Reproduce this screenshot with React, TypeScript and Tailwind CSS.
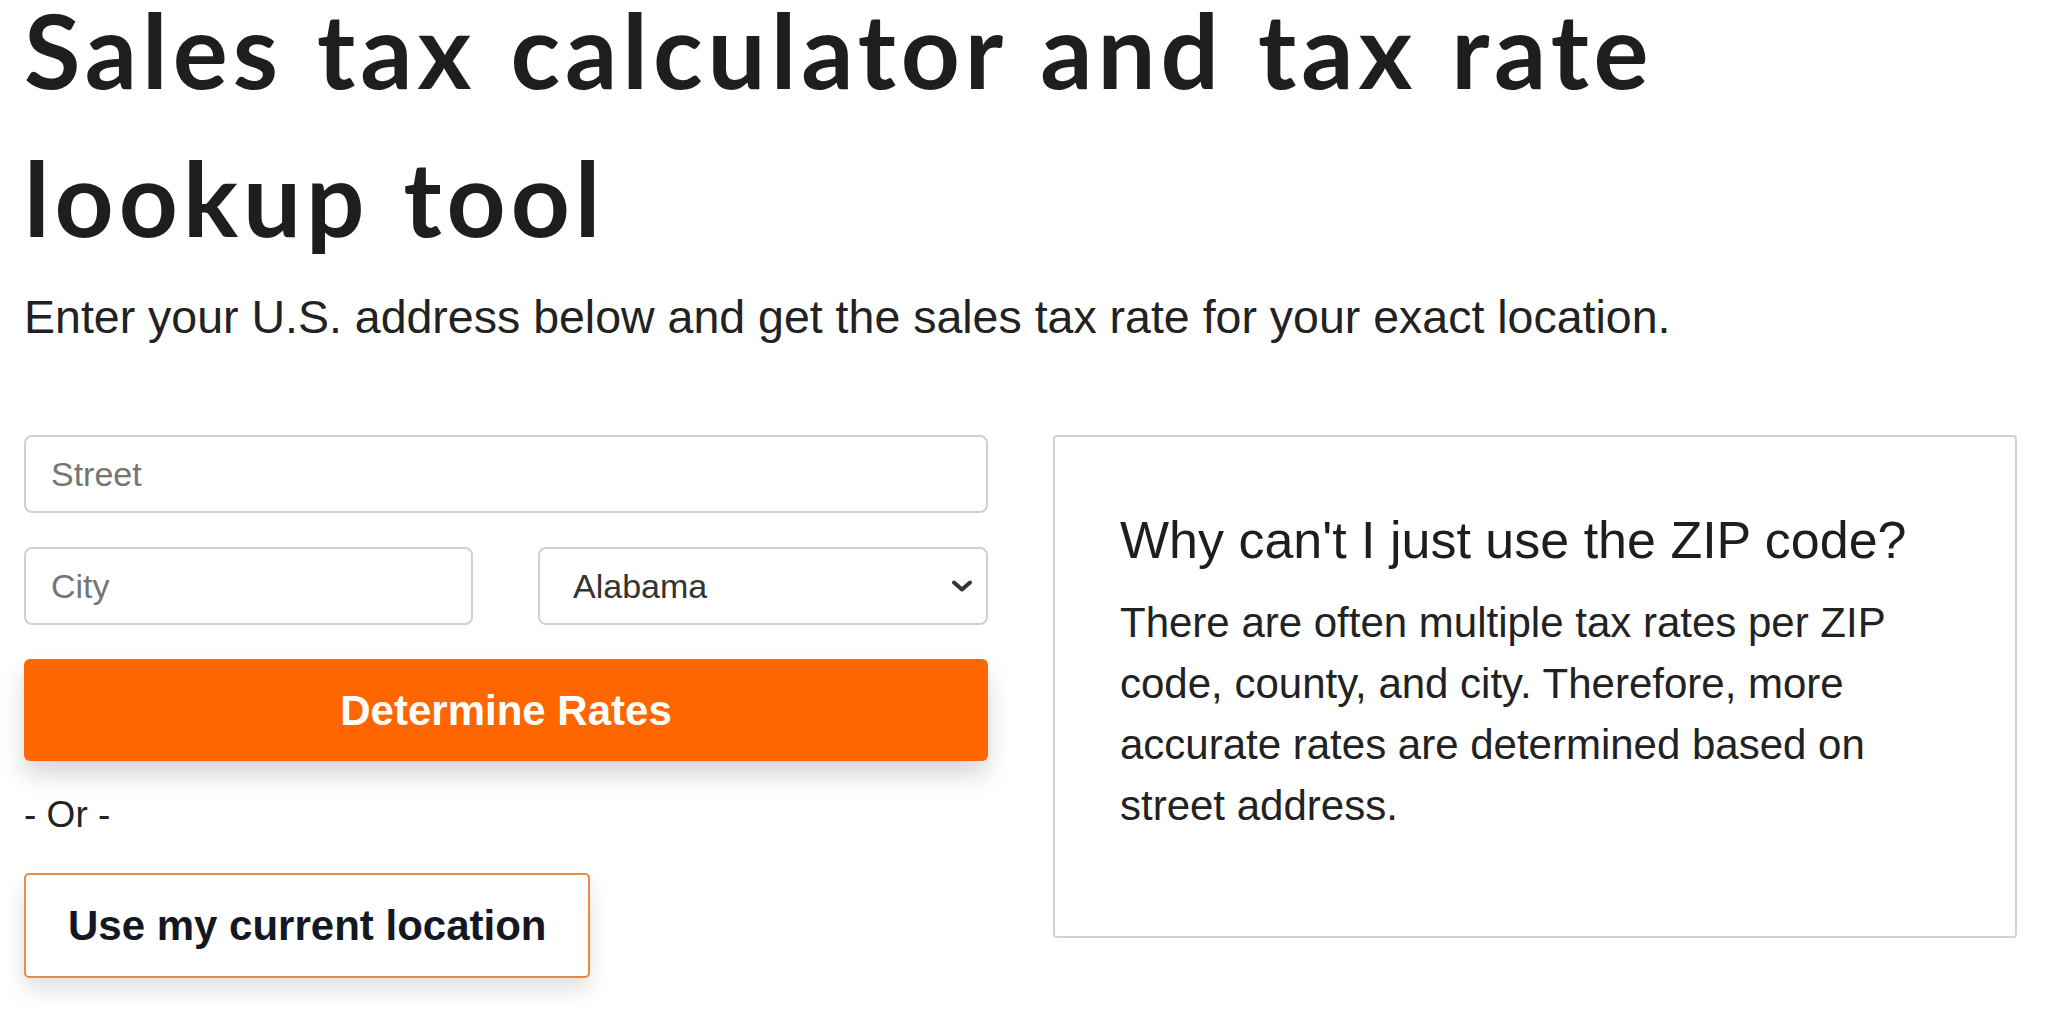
import React from 'react';

const US_STATES = ['Alabama', 'Alaska', 'Arizona', 'Arkansas', 'California', 'Colorado', 'Connecticut', 'Delaware', 'Florida', 'Georgia'];

const ChevronDown: React.FC = () => (
  <svg width="22" height="14" viewBox="0 0 22 14" fill="none" className="pointer-events-none absolute right-[15px] top-1/2 -translate-y-1/2">
    <path d="M3 3.5 L11 10.5 L19 3.5" stroke="#333" strokeWidth="4" strokeLinecap="round" strokeLinejoin="round" />
  </svg>
);

const App: React.FC = () => {
  return (
    <div className="min-h-screen bg-white text-[#222] font-['Liberation_Sans',Arial,sans-serif] overflow-hidden">
      <div className="pl-[24px] pr-[31px]">
        <h1 className="-mt-[25px] max-w-[1720px] font-['Lato',sans-serif] font-bold text-[103px] leading-[148px] tracking-[5px] [word-spacing:4px] text-[#1e1e1e]">
          Sales tax calculator and tax rate lookup tool
        </h1>
        <p className="mt-[15px] text-[46.5px] leading-[63px] text-[#222]">
          Enter your U.S. address below and get the sales tax rate for your exact location.
        </p>

        <div className="mt-[86px] grid grid-cols-[964px_964px] gap-x-[65px]">
          {/* address form */}
          <div className="flex flex-col">
            <input
              type="text"
              placeholder="Street"
              className="h-[78px] w-full rounded-[8px] border-2 border-[#d0d0d0] bg-white pl-[25px] text-[34px] text-[#333] outline-none placeholder:text-[#757575]"
            />
            <div className="mt-[34px] grid grid-cols-[449px_450px] gap-x-[65px]">
              <input
                type="text"
                placeholder="City"
                className="h-[78px] w-full rounded-[8px] border-2 border-[#d0d0d0] bg-white pl-[25px] text-[34px] text-[#333] outline-none placeholder:text-[#757575]"
              />
              <div className="relative">
                <select
                  defaultValue="Alabama"
                  className="h-[78px] w-full appearance-none rounded-[8px] border-2 border-[#d0d0d0] bg-white pl-[33px] text-[34px] text-[#333] outline-none"
                >
                  {US_STATES.map((s) => (
                    <option key={s} value={s}>{s}</option>
                  ))}
                </select>
                <ChevronDown />
              </div>
            </div>
            <button className="mt-[34px] h-[102px] w-full rounded-[6px] bg-[#ff6600] text-[42px] font-bold text-white shadow-[0_14px_24px_rgba(0,0,0,0.16)]">
              Determine Rates
            </button>
            <div className="mt-[30px] text-[37px] leading-[48px] text-[#222]">- Or -</div>
            <div className="mt-[34px]">
              <button className="h-[105px] rounded-[5px] border-2 border-[#e98a45] bg-white px-[42px] text-[42px] font-bold text-[#141822] shadow-[0_12px_22px_rgba(0,0,0,0.12)]">
                Use my current location
              </button>
            </div>
          </div>

          {/* info card */}
          <div className="h-[503px] rounded-[4px] border-2 border-[#d2d2d2] pl-[65px] pr-[65px] pt-[72px]">
            <h2 className="text-[52px] leading-[62px] text-[#1e1e1e]">Why can't I just use the ZIP code?</h2>
            <p className="mt-[21px] text-[42px] leading-[61px] text-[#222]">
              There are often multiple tax rates per ZIP code, county, and city. Therefore, more accurate rates are determined based on street address.
            </p>
          </div>
        </div>
      </div>
    </div>
  );
};

export default App;
